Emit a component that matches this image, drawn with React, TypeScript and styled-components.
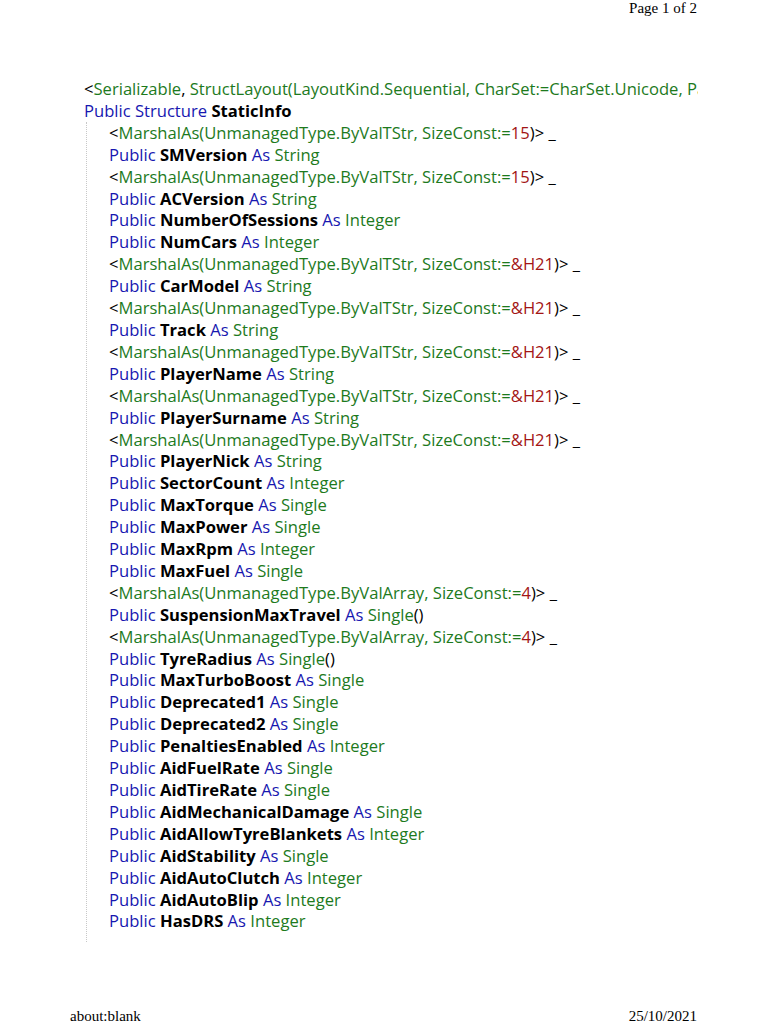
import React from 'react';
import styled, { createGlobalStyle } from 'styled-components';

const GlobalStyle = createGlobalStyle`
  html, body {
    margin: 0;
    padding: 0;
    background: #fff;
  }
`;

const Page = styled.div`
  width: 768px;
  height: 1024px;
  display: flex;
  flex-direction: column;
  background: #fff;
  overflow: hidden;
`;

const PrintHeader = styled.div`
  display: flex;
  justify-content: flex-end;
  padding: 0 71px 0 0;
  height: 18px;
  font-family: 'Liberation Serif', serif;
  font-size: 15px;
  line-height: 17px;
  color: #000;
`;

const PrintFooter = styled.div`
  margin-top: auto;
  display: flex;
  justify-content: space-between;
  padding: 0 71px 0 70px;
  height: 16px;
  font-family: 'Liberation Serif', serif;
  font-size: 15px;
  line-height: 17px;
  color: #000;
`;

const Code = styled.div`
  margin: 60px 70px 0 84px;
  font-family: 'Open Sans', 'Noto Sans', sans-serif;
  font-size: 16.6px;
  line-height: 21.9px;
  color: #000;
  overflow: hidden;
`;

const Line = styled.div`
  white-space: nowrap;
`;

const Body = styled.div`
  margin-left: 2px;
  padding-left: 22px;
  padding-bottom: 10px;
  border-left: 1px dotted #c8c8c8;
`;

const Kw = styled.span`
  color: #1717b0;
`;

const Ty = styled.span`
  color: #1d7a1d;
`;

const Num = styled.span`
  color: #a31515;
`;

const Name = styled.span`
  font-weight: 700;
  color: #000;
`;

type Field = { name: string; type: string; arr?: boolean };
type Row = { marshal: string; size: string } | Field;

const rows: Row[] = [
  { marshal: 'ByValTStr', size: '15' },
  { name: 'SMVersion', type: 'String' },
  { marshal: 'ByValTStr', size: '15' },
  { name: 'ACVersion', type: 'String' },
  { name: 'NumberOfSessions', type: 'Integer' },
  { name: 'NumCars', type: 'Integer' },
  { marshal: 'ByValTStr', size: '&H21' },
  { name: 'CarModel', type: 'String' },
  { marshal: 'ByValTStr', size: '&H21' },
  { name: 'Track', type: 'String' },
  { marshal: 'ByValTStr', size: '&H21' },
  { name: 'PlayerName', type: 'String' },
  { marshal: 'ByValTStr', size: '&H21' },
  { name: 'PlayerSurname', type: 'String' },
  { marshal: 'ByValTStr', size: '&H21' },
  { name: 'PlayerNick', type: 'String' },
  { name: 'SectorCount', type: 'Integer' },
  { name: 'MaxTorque', type: 'Single' },
  { name: 'MaxPower', type: 'Single' },
  { name: 'MaxRpm', type: 'Integer' },
  { name: 'MaxFuel', type: 'Single' },
  { marshal: 'ByValArray', size: '4' },
  { name: 'SuspensionMaxTravel', type: 'Single', arr: true },
  { marshal: 'ByValArray', size: '4' },
  { name: 'TyreRadius', type: 'Single', arr: true },
  { name: 'MaxTurboBoost', type: 'Single' },
  { name: 'Deprecated1', type: 'Single' },
  { name: 'Deprecated2', type: 'Single' },
  { name: 'PenaltiesEnabled', type: 'Integer' },
  { name: 'AidFuelRate', type: 'Single' },
  { name: 'AidTireRate', type: 'Single' },
  { name: 'AidMechanicalDamage', type: 'Single' },
  { name: 'AidAllowTyreBlankets', type: 'Integer' },
  { name: 'AidStability', type: 'Single' },
  { name: 'AidAutoClutch', type: 'Integer' },
  { name: 'AidAutoBlip', type: 'Integer' },
  { name: 'HasDRS', type: 'Integer' },
];

function CodeRow({ row }: { row: Row }) {
  if ('marshal' in row) {
    return (
      <Line>
        {'<'}
        <Ty>MarshalAs(UnmanagedType.{row.marshal}, SizeConst:=</Ty>
        <Num>{row.size}</Num>
        {')> _'}
      </Line>
    );
  }
  return (
    <Line>
      <Kw>Public </Kw>
      <Name>{row.name}</Name>
      <Kw> As </Kw>
      <Ty>{row.type}</Ty>
      {row.arr ? '()' : ''}
    </Line>
  );
}

export default function App() {
  return (
    <Page>
      <GlobalStyle />
      <PrintHeader>Page 1 of 2</PrintHeader>
      <Code>
        <Line>
          {'<'}
          <Ty>Serializable</Ty>
          {', '}
          <Ty>StructLayout(LayoutKind.Sequential, CharSet:=CharSet.Unicode, Pa</Ty>
        </Line>
        <Line>
          <Kw>Public Structure </Kw>
          <Name>StaticInfo</Name>
        </Line>
        <Body>
          {rows.map((r, i) => (
            <CodeRow key={i} row={r} />
          ))}
        </Body>
      </Code>
      <PrintFooter>
        <span>about:blank</span>
        <span>25/10/2021</span>
      </PrintFooter>
    </Page>
  );
}
